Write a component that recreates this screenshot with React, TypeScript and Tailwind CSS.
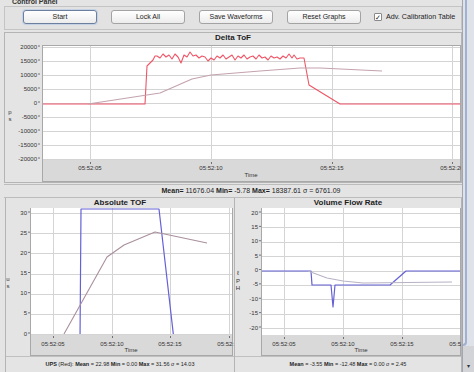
import React from 'react';

type Tick = { at: number; label: string };
type Series = { pts: number[][]; color: string; w?: number };

type ChartProps = {
  id: string;
  vb: [number, number, number, number];
  plot: [number, number, number, number];
  axisBottom: number;
  yTicks: Tick[];
  xTicks: Tick[];
  labelRight: number;
  xLabelY: number;
  timeX: number;
  timeY: number;
  unit: { x: number; ys: number[]; chars: string[] };
  series: Series[];
};

const RED = '#ee5566';
const MAUVE = '#c3a3ad';
const BLUE = '#6461d6';

const pts = (a: number[][]) => a.map(([x, y]) => `${x},${y}`).join(' ');

function Chart({ id, vb, plot, axisBottom, yTicks, xTicks, labelRight, xLabelY, timeX, timeY, unit, series }: ChartProps) {
  const [x0, y0, x1, y1] = plot;
  const [vx, vy, vw, vh] = vb;
  return (
    <svg width={vw} height={vh} viewBox={`${vx} ${vy} ${vw} ${vh}`} className="block shrink-0">
      <defs>
        <clipPath id={id}>
          <rect x={x0} y={y0} width={x1 - x0} height={y1 - y0} />
        </clipPath>
      </defs>
      <rect x={x0 - 0.5} y={y0 - 0.5} width={x1 - x0 + 1} height={axisBottom - y0 + 1} fill="#d9d9d9" stroke="#a8a8a8" />
      <rect x={x0} y={y0} width={x1 - x0} height={y1 - y0} fill="#ffffff" />
      <g stroke="#d4d4d4" strokeWidth={1}>
        {yTicks.map((t) => (
          <line key={'h' + t.label} x1={x0} x2={x1} y1={Math.round(t.at) + 0.5} y2={Math.round(t.at) + 0.5} />
        ))}
        {xTicks.map((t) => (
          <line key={'v' + t.label} x1={t.at + 0.5} x2={t.at + 0.5} y1={y0} y2={y1} />
        ))}
      </g>
      <g clipPath={`url(#${id})`} fill="none" strokeLinejoin="round">
        {series.map((s, i) => (
          <polyline key={i} points={pts(s.pts)} stroke={s.color} strokeWidth={s.w ?? 1.1} />
        ))}
      </g>
      <g stroke="#555555" strokeWidth={0.8}>
        {yTicks.map((t) => (
          <line key={'yt' + t.label} x1={labelRight + 1} x2={labelRight + 3} y1={t.at - 1} y2={t.at - 1} />
        ))}
        {xTicks.map((t) => (
          <line key={'xt' + t.label} x1={t.at + 0.5} x2={t.at + 0.5} y1={y1 + 2} y2={y1 + 4} />
        ))}
      </g>
      <g fontSize={6} fill="#333333">
        {yTicks.map((t) => (
          <text key={'yl' + t.label} x={labelRight} y={t.at + 1.5} textAnchor="end">
            {t.label}
          </text>
        ))}
        {xTicks.map((t) => (
          <text key={'xl' + t.label} x={t.at} y={xLabelY + 2} textAnchor="middle">
            {t.label}
          </text>
        ))}
        <text x={timeX} y={timeY + 2} textAnchor="middle">Time</text>
        {unit.chars.map((c, i) => (
          <text key={'u' + i} x={unit.x} y={unit.ys[i] + 2} textAnchor="middle">
            {c}
          </text>
        ))}
      </g>
    </svg>
  );
}

const noise = [
  [157, 56], [160, 58], [163, 54], [166, 57], [169, 55], [172, 59], [175, 54], [178, 57], [181, 63], [184, 55],
  [187, 57], [190, 52], [193, 56], [196, 55], [199, 58], [202, 56], [205, 57], [208, 61], [211, 58], [214, 60],
  [217, 56], [220, 58], [223, 55], [226, 59], [229, 57], [232, 55], [235, 60], [238, 56], [241, 58], [244, 55],
  [247, 59], [250, 57], [253, 56], [256, 59], [259, 55], [262, 58], [265, 57], [268, 60], [271, 56], [274, 58],
  [277, 57], [280, 59], [283, 56], [286, 58], [289, 54], [292, 58], [294, 55], [297, 59], [300, 58], [304, 58],
];

const deltaSeries: Series[] = [
  { pts: [[43, 104], [145, 104], [147, 66], [150, 63], [153, 60], [155, 56], ...noise, [309, 85], [340, 104], [460, 104]], color: RED },
  { pts: [[88, 104], [160, 93], [192, 79], [211, 75], [260, 71], [300, 68], [320, 68], [382, 71]], color: MAUVE },
];

const absSeries: Series[] = [
  { pts: [[80, 340], [81, 209], [159, 209], [174, 340]], color: BLUE, w: 1.2 },
  { pts: [[64, 334], [107, 257], [124, 245], [155, 232], [207, 243]], color: '#a8909c' },
];

const vfrSeries: Series[] = [
  { pts: [[262, 271], [311, 271], [312, 285], [331, 285], [333, 307], [335, 285], [390, 285], [406, 271], [460, 271]], color: BLUE, w: 1.2 },
  { pts: [[308, 271], [327, 278], [343, 281], [363, 283], [452, 282]], color: '#b8b2c4' },
];

const times = (xs: number[]) => ['05:52:05', '05:52:10', '05:52:15', '05:52:20'].map((label, i) => ({ at: xs[i], label }));

function Btn({ label, primary }: { label: string; primary?: boolean }) {
  return (
    <div
      className={`flex h-[14px] w-[74px] items-center justify-center rounded-[3px] border bg-gradient-to-b from-white to-[#ececec] text-[7px] text-[#1e1e1e] ${
        primary ? 'border-[#6d7f9e] shadow-[0_0_0_1px_#c5d2e6]' : 'border-[#a3a3a3]'
      }`}
    >
      {label}
    </div>
  );
}

export default function App() {
  return (
    <div className="flex h-[372px] w-[474px] overflow-hidden bg-[#e4e4e4] font-['Liberation_Sans',Arial,sans-serif] text-[#1e1e1e]">
      <div className="flex w-[462px] shrink-0 flex-col">
        {/* control panel title, cut off at top */}
        <div className="h-[6px] overflow-hidden pl-[12px]">
          <span className="-mt-[2px] block text-[7px] font-bold leading-[7px] text-[#333]">Control Panel</span>
        </div>
        <div className="ml-[4px] flex h-[24px] items-start gap-[14px] border border-[#c4c4c4] bg-[#e2e2e2] pl-[18px] pt-[3px]">
          <Btn label="Start" primary />
          <Btn label="Lock All" />
          <Btn label="Save Waveforms" />
          <Btn label="Reset Graphs" />
          <div className="-ml-[1px] flex h-[14px] items-center gap-[4px]">
            <div className="flex h-[8px] w-[8px] items-center justify-center rounded-[1px] border border-[#8a8a8a] bg-white text-[7px] leading-none text-[#222]">
              ✓
            </div>
            <span className="text-[7.2px]">Adv. Calibration Table</span>
          </div>
        </div>

        {/* Delta ToF */}
        <div className="ml-[4px] mt-[2px] flex flex-col border border-[#b4b4b4]">
          <div className="flex h-[9px] items-center justify-center text-[8px] font-bold">Delta ToF</div>
          <Chart
            id="delta"
            vb={[5, 42, 456, 140]}
            plot={[43, 46, 460, 160]}
            axisBottom={181}
            yTicks={[20000, 15000, 10000, 5000, 0, -5000, -10000, -15000, -20000].map((v, i) => ({ at: 47 + i * 14, label: String(v) }))}
            xTicks={times([90, 211, 332, 452])}
            labelRight={37}
            xLabelY={168}
            timeX={251}
            timeY={175}
            unit={{ x: 10, ys: [112, 119], chars: ['p', 's'] }}
            series={deltaSeries}
          />
        </div>

        <div className="ml-[4px] mt-[1px] flex h-[14px] items-center justify-center border-y border-[#bcbcbc] pl-[36px] text-[7px]">
          <b>Mean=</b>&nbsp;11676.04&nbsp;<b>Min=</b>&nbsp;-5.78&nbsp;<b>Max=</b>&nbsp;18387.61&nbsp;σ = 6761.09
        </div>

        <div className="ml-[5px] flex flex-1">
          <div className="flex w-[230px] flex-col border-x border-[#b4b4b4]">
            <div className="flex h-[10px] items-center justify-center text-[8px] font-bold">Absolute TOF</div>
            <Chart
              id="abs"
              vb={[6, 208, 228, 148]}
              plot={[31, 208, 232, 334]}
              axisBottom={355}
              yTicks={['30', '25', '20', '15', '10', '5', '0'].map((label, i) => ({ at: 213 + i * 20.17, label }))}
              xTicks={times([53, 112, 170, 229])}
              labelRight={27}
              xLabelY={344}
              timeX={131}
              timeY={350}
              unit={{ x: 8, ys: [279, 286], chars: ['u', 's'] }}
              series={absSeries}
            />
            <div className="flex flex-1 items-center justify-center border-t border-[#c0c0c0] text-[5.5px]">
              <b>UPS</b>&nbsp;(Red):&nbsp;<b>Mean</b>&nbsp;= 22.98&nbsp;<b>Min</b>&nbsp;= 0.00&nbsp;<b>Max</b>&nbsp;= 31.56&nbsp;σ = 14.03
            </div>
          </div>
          <div className="flex w-[227px] flex-col border-r border-[#b4b4b4]">
            <div className="flex h-[10px] items-center justify-center text-[8px] font-bold">Volume Flow Rate</div>
            <Chart
              id="vfr"
              vb={[235, 208, 226, 148]}
              plot={[262, 208, 460, 335]}
              axisBottom={355}
              yTicks={['20', '15', '10', '5', '0', '-5', '-10', '-15', '-20'].map((label, i) => ({ at: 213 + i * 14.375, label }))}
              xTicks={times([284, 343, 402, 461])}
              labelRight={258}
              xLabelY={344}
              timeX={361}
              timeY={350}
              unit={{ x: 238, ys: [273, 281, 288], chars: ['ℓ', 'P', 'H'] }}
              series={vfrSeries}
            />
            <div className="flex flex-1 items-center justify-center border-t border-[#c0c0c0] text-[5.5px]">
              <b>Mean</b>&nbsp;= -3.55&nbsp;<b>Min</b>&nbsp;= -12.48&nbsp;<b>Max</b>&nbsp;= 0.00&nbsp;σ = 2.45
            </div>
          </div>
        </div>
      </div>

      {/* scrollbar strip */}
      <div className="flex w-[12px] shrink-0 flex-col border-l border-[#a4a6ab] bg-[#dfe3e9]">
        <div className="h-[346px] w-[4px] rounded-br-[5px] border-b-2 border-r-2 border-[#9fb2d2]" />
        <div className="flex flex-1 items-end justify-center bg-[#d2d4d8] pb-[3px] text-[6px] leading-none text-[#333]">▾</div>
      </div>
    </div>
  );
}
